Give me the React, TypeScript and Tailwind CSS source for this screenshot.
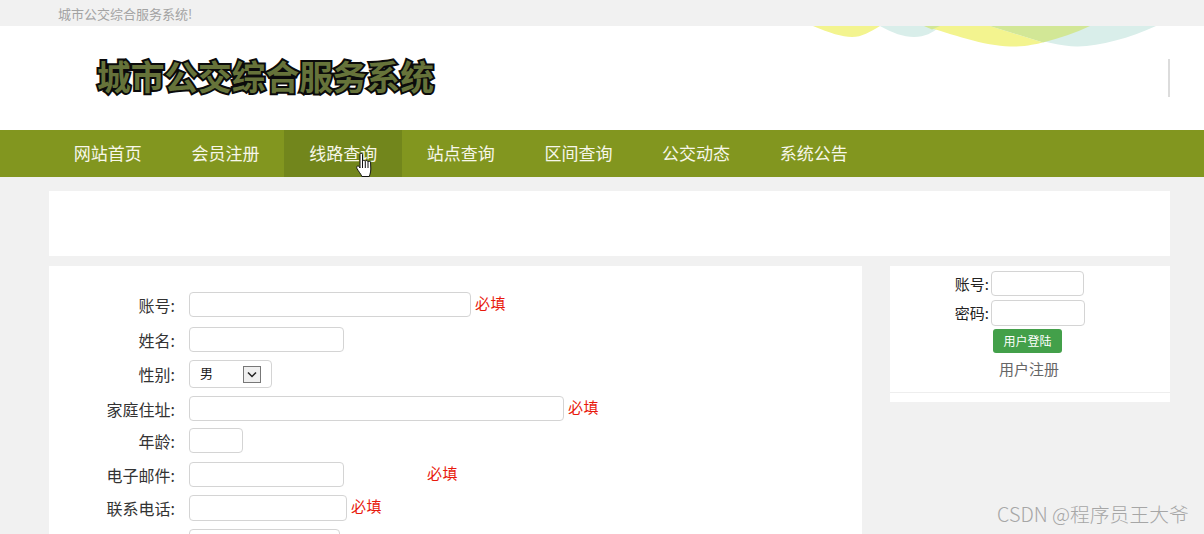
const NAV_ITEMS = ["网站首页", "会员注册", "线路查询", "站点查询", "区间查询", "公交动态", "系统公告"];

const Field = ({ label, inputClass, rowClass, note, noteClass }: {
  label: string;
  inputClass: string;
  rowClass: string;
  note?: boolean;
  noteClass?: string;
}) => (
  <div className={`flex items-center ${rowClass}`}>
    <span className="w-[126px] text-right text-[16px] leading-none text-[#333]">{label}:</span>
    <div className={`ml-[14px] shrink-0 rounded-[4px] border border-[#d4d4d4] bg-white ${inputClass}`} />
    {note && <span className={`mt-[-5px] text-[15px] leading-none tracking-[0.4px] text-[#e8190c] ${noteClass ?? "ml-1"}`}>必填</span>}
  </div>
);

const Waves = () => (
  <svg className="absolute left-[800px] top-0" width="370" height="24" viewBox="800 26 370 24">
    <path d="M813 26 C830 33 842 37 852 37 C862 37 870 32 880 26 Z" fill="#f3f48f" />
    <path d="M880 26 C893 33 903 37 914 37 C925 37 932 33 941 26 Z" fill="#d9eeea" />
    <path d="M990 26 C1030 38 1060 47 1078 46.500 C1100 46 1130 38 1156 26 Z" fill="#d9eeea" />
    <path d="M925 26 C950 34 985 46 1010 46.500 C1025 47 1036 44 1043 42.500 L990 26 Z" fill="#f3f48f" />
    <path d="M990 26 L1043 42.500 C1060 38 1075 33 1090 26 Z" fill="#d2e796" />
    <path d="M924 26 L940 26 L932 29.500 Z" fill="#d2e796" />
  </svg>
);

const HandCursor = () => (
  <svg className="absolute left-[355px] top-[152px]" width="19" height="26" viewBox="0 0 19 26">
    <path
      d="M5 2.500 C5 1 7.500 1 7.500 2.500 L7.500 9 C8 7.800 10 7.800 10.300 9.300 C10.800 8.200 12.800 8.300 13 9.800 C13.600 8.900 15.500 9.200 15.600 10.800 L15.800 17 C15.800 20 15 22 14.300 24.500 L6.800 24.500 C6 22 3.500 19.500 2 16.500 C1 14.500 2.800 13 4.300 14.800 L5 16 Z"
      fill="#fff"
      stroke="#111"
      strokeWidth="1"
      strokeLinejoin="round"
    />
    <path d="M7.500 9 L7.500 16 M10.300 9.300 L10.300 16 M13 9.800 L13 16" stroke="#111" strokeWidth="1" fill="none" />
  </svg>
);

export default function App() {
  return (
    <div className="relative h-[534px] overflow-hidden bg-[#f1f1f1] font-['Noto_Sans_CJK_SC','Liberation_Sans',sans-serif]">
      <div className="h-[26px] pl-[58px] text-[13px] leading-[27px] text-[#a3a3a3]">城市公交综合服务系统!</div>

      <div className="relative flex h-[104px] items-center bg-white pl-[97px]">
        <Waves />
        <h1 className="mt-[-5px] text-[33.700px] font-bold leading-none text-[#66733a] [paint-order:stroke_fill] [-webkit-text-stroke:4px_#0b0b0b]">
          城市公交综合服务系统
        </h1>
        <div className="absolute left-[1168px] top-[33px] h-[38px] w-[2px] bg-[#dcdcdc]" />
      </div>

      <nav className="flex h-[47px] bg-[#82961f] pl-[49px]">
        {NAV_ITEMS.map((item, index) => (
          <a
            key={item}
            className={`flex w-[117.670px] items-center justify-center pb-[2px] text-[17px] leading-none text-[#f7f7ea] ${index === 2 ? "bg-[#72861c]" : ""}`}
          >
            {item}
          </a>
        ))}
      </nav>
      <HandCursor />

      <div className="mx-[49px] mt-[14px] h-[65px] w-[1121px] bg-white" />

      <div className="ml-[49px] mt-[10px] flex w-[1121px] items-start">
        <section className="h-[300px] w-[813px] shrink-0 bg-white pt-[26px]">
          <Field label="账号" inputClass="h-[25px] w-[282px]" rowClass="" note />
          <Field label="姓名" inputClass="h-[25px] w-[155px]" rowClass="mt-[10px]" />
          <div className="mt-[8px] flex items-center">
            <span className="w-[126px] text-right text-[16px] leading-none text-[#333]">性别:</span>
            <div className="ml-[14px] flex h-[28px] w-[83px] items-center rounded-[4px] border border-[#d4d4d4] bg-white pl-[10px]">
              <span className="mt-[-3px] text-[13px] leading-none text-[#222]">男</span>
              <span className="ml-[30px] flex h-[17px] w-[18px] items-center justify-center border border-[#777] bg-[#efefef]">
                <svg width="10" height="7" viewBox="0 0 10 7"><path d="M1 1.500 L5 5.500 L9 1.500" fill="none" stroke="#222" strokeWidth="1.500" /></svg>
              </span>
            </div>
          </div>
          <Field label="家庭住址" inputClass="h-[25px] w-[375px]" rowClass="mt-[8px]" note />
          <Field label="年龄" inputClass="h-[25px] w-[54px]" rowClass="mt-[7px]" />
          <div className="mt-[9px]">
            <Field label="电子邮件" inputClass="h-[25px] w-[155px]" rowClass="" note noteClass="ml-[83px]" />
          </div>
          <Field label="联系电话" inputClass="h-[26px] w-[158px]" rowClass="mt-[8px]" note />
          <div className="ml-[140px] mt-[8px] h-[25px] w-[151px] rounded-[4px] border border-[#d4d4d4] bg-white" />
        </section>

        <aside className="ml-[28px] h-[136px] w-[280px] bg-white">
          <div className="h-[127px] border-b border-[#eeeeee] pt-[5px]">
            <div className="flex items-center">
              <span className="w-[99px] text-right text-[15px] leading-none text-[#222]">账号:</span>
              <div className="ml-[2px] h-[25px] w-[93px] rounded-[4px] border border-[#d4d4d4]" />
            </div>
            <div className="mt-[4px] flex items-center">
              <span className="mt-[-2px] w-[99px] text-right text-[15px] leading-none text-[#222]">密码:</span>
              <div className="ml-[2px] h-[26px] w-[94px] rounded-[4px] border border-[#d4d4d4]" />
            </div>
            <button className="ml-[103px] mt-[3px] flex h-[24px] w-[69px] items-center justify-center rounded-[3px] bg-[#43a04a] text-[12px] leading-none text-white">
              用户登陆
            </button>
            <div className="mt-[8px] pl-[109px] text-[15px] leading-none text-[#666]">用户注册</div>
          </div>
        </aside>
      </div>

      <div className="absolute left-[997px] top-[504px] text-[19.800px] font-light leading-none text-[#a6a6a6]">CSDN @程序员王大爷</div>
    </div>
  );
}
